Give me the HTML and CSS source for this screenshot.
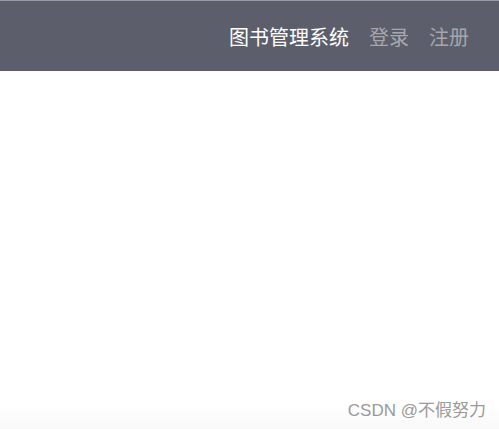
FILE: index.html
```html
<!DOCTYPE html>
<html lang="zh">
<head>
<meta charset="utf-8">
<link rel="stylesheet" href="styles.css">
</head>
<body>
<header class="topbar">
  <span class="title">图书管理系统</span>
  <a class="link">登录</a>
  <a class="link">注册</a>
</header>
<main class="content"></main>
<div class="fade"></div>
<div class="watermark">CSDN @不假努力</div>
</body>
</html>
```
FILE: styles.css
```css
html, body {
  margin: 0;
  padding: 0;
  height: 100%;
  background: #ffffff;
  font-family: "Microsoft YaHei", "Noto Sans CJK SC", sans-serif;
}
body {
  position: relative;
  overflow: hidden;
}
.topbar {
  height: 71px;
  background: #5c5e6b;
  border-top: 1px solid #9a9ba3;
  box-sizing: border-box;
  display: flex;
  align-items: center;
  justify-content: flex-end;
  padding-right: 30px;
  gap: 20px;
  font-size: 20px;
}
.title {
  color: #ffffff;
}
.link {
  color: #a6a7ad;
  cursor: pointer;
}
.content {
  height: 300px;
}
.fade {
  position: absolute;
  left: 0;
  right: 0;
  bottom: 0;
  height: 24px;
  background: linear-gradient(to bottom, rgba(240, 240, 240, 0), rgba(240, 240, 240, 0.45));
}
.watermark {
  position: absolute;
  right: 13px;
  bottom: 8px;
  font-family: "Liberation Sans", "Noto Sans CJK SC", sans-serif;
  font-size: 17px;
  color: #9a9a9a;
}
```
